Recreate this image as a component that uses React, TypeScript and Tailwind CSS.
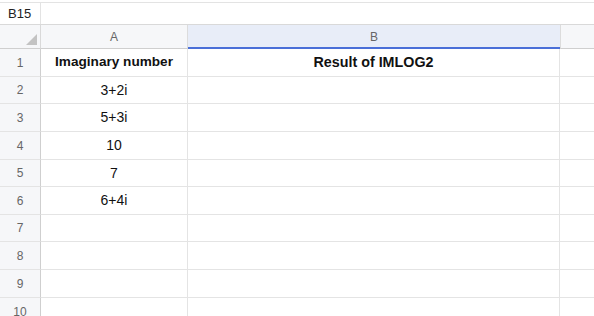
const rows: Array<{ a: string; b: string; bold?: boolean }> = [
  { a: "Imaginary number", b: "Result of IMLOG2", bold: true },
  { a: "3+2i", b: "" },
  { a: "5+3i", b: "" },
  { a: "10", b: "" },
  { a: "7", b: "" },
  { a: "6+4i", b: "" },
  { a: "", b: "" },
  { a: "", b: "" },
  { a: "", b: "" },
  { a: "", b: "" },
];

const heights = ["h-[28px]", "h-[27px]", "h-[28px]", "h-[28px]", "h-[27px]", "h-[28px]", "h-[27px]", "h-[28px]", "h-[28px]", "h-[28px]"];

export default function App() {
  return (
    <div className="w-[594px] h-[316px] overflow-hidden bg-white font-['Liberation_Sans',Arial,sans-serif] text-[#222]">
      {/* formula bar */}
      <div className="mt-[2px] flex h-[23px] border-t border-[#e3e3e3] border-b border-b-[#d9d9d9]">
        <div className="w-[41px] shrink-0 border-r border-[#e3e3e3] pl-[8px] text-[13px] leading-[22px]">B15</div>
        <div className="flex-1" />
      </div>

      {/* column headers */}
      <div className="flex h-[24px] bg-[#f6f7f9] text-[12px] text-[#666]">
        <div className="relative w-[41px] shrink-0 border-r border-[#d9d9d9] border-b border-b-[#cfcfcf]">
          <svg className="absolute left-[26px] top-[9px]" width="11" height="11" viewBox="0 0 11 11">
            <polygon points="11,0 11,11 0,11" fill="#c3c3c3" />
          </svg>
        </div>
        <div className="w-[147px] shrink-0 border-r border-[#dcdcdc] border-b border-b-[#cfcfcf] flex items-center justify-center">A</div>
        <div className="w-[372px] shrink-0 bg-[#e8edf8] border-b-2 border-[#4a6fd8] flex items-center justify-center pt-[1px]">B</div>
        <div className="flex-1 border-l border-[#dcdcdc] border-b border-b-[#cfcfcf]" />
      </div>

      {/* grid */}
      {rows.map((r, i) => (
        <div key={i} className={`flex ${heights[i]}`}>
          <div className="w-[41px] shrink-0 bg-[#f6f7f9] border-r border-[#cfcfcf] border-b border-b-[#e4e4e4] flex items-center justify-center text-[12px] text-[#666]">
            {i + 1}
          </div>
          <div
            className={`w-[147px] shrink-0 border-r border-[#e4e4e4] border-b border-b-[#e4e4e4] flex items-center justify-center text-[#111] ${
              r.bold ? "text-[13.6px] font-bold" : "text-[14px]"
            }`}
          >
            {r.a}
          </div>
          <div className="w-[372px] shrink-0 border-r border-[#e4e4e4] border-b border-b-[#e4e4e4] flex items-center justify-center text-[14.3px] font-bold text-[#111]">
            {r.b}
          </div>
          <div className="flex-1 border-b border-[#e4e4e4]" />
        </div>
      ))}
    </div>
  );
}
